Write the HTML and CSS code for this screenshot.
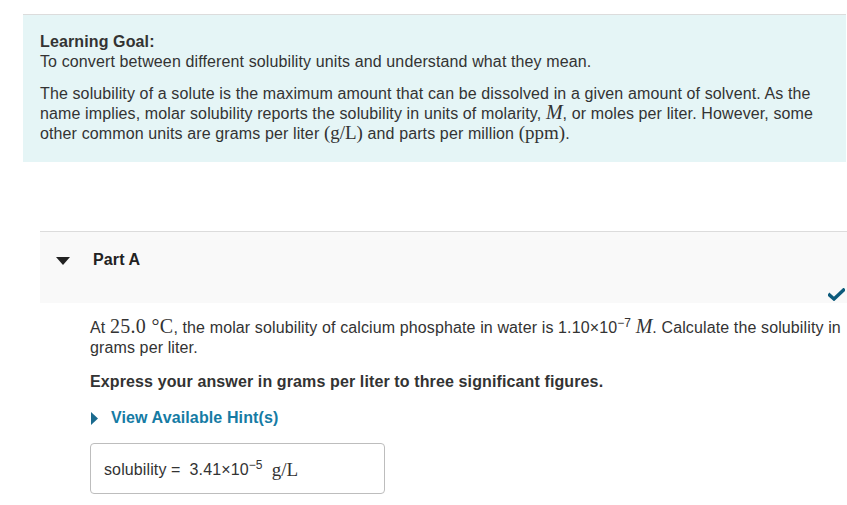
FILE: index.html
```html
<!DOCTYPE html>
<html>
<head>
<meta charset="utf-8">
<link rel="stylesheet" href="styles.css">
</head>
<body>
<div class="intro">
  <div class="goal-title">Learning Goal:</div>
  <div class="goal-text">To convert between different solubility units and understand what they mean.</div>
  <p class="intro-p">The solubility of a solute is the maximum amount that can be dissolved in a given amount of solvent. As the name implies, molar solubility reports the solubility in units of molarity, <span class="mi">M</span>, or moles per liter. However, some other common units are grams per liter <span class="mr">(g/L)</span> and parts per million <span class="mr">(ppm)</span>.</p>
</div>

<div class="part">
  <div class="part-header">
    <svg class="caret-down" width="14" height="8" viewBox="0 0 14 8"><path d="M0 0 H14 L7 8 Z" fill="#222"/></svg>
    <span class="part-title">Part A</span>
    <svg class="check" width="17" height="13" viewBox="0 0 17 13"><path d="M1.5 7 L6 11 L15.5 2" fill="none" stroke="#0d5b7c" stroke-width="3.4" stroke-linecap="square"/></svg>
  </div>
  <div class="part-body">
    <p class="question">At <span class="mr big">25.0 °C</span>, the molar solubility of calcium phosphate in water is 1.10×10<sup>−7</sup> <span class="mi">M</span>. Calculate the solubility in grams per liter.</p>
    <p class="instr">Express your answer in grams per liter to three significant figures.</p>
    <div class="hint">
      <svg class="caret-right" width="7" height="13" viewBox="0 0 7 13"><path d="M0 0 L7 6.5 L0 13 Z" fill="#1a6a8e"/></svg>
      <span>View Available Hint(s)</span>
    </div>
    <div class="answer">
      <span class="ans-label">solubility =</span>
      <span class="ans-val">3.41×10<sup>−5</sup></span>
      <span class="mr ans-unit">g/L</span>
    </div>
  </div>
</div>
</body>
</html>
```

FILE: styles.css
```css
html, body {
  margin: 0;
  padding: 0;
  background: #fff;
}
body {
  font-family: "Liberation Sans", Arial, sans-serif;
  font-size: 16px;
  line-height: 20px;
  letter-spacing: 0.12px;
  color: #333;
  padding-top: 14px;
}
.intro {
  margin-left: 23px;
  width: 823px;
  box-sizing: border-box;
  border-top: 1px solid #dcdcdc;
  background: #e5f5f6;
  padding: 17px 17px 18px 17px;
}
.goal-title {
  font-weight: bold;
}
.intro-p {
  margin: 12px 0 0 0;
}
.mi {
  font-family: "Liberation Serif", "Times New Roman", serif;
  font-style: italic;
  font-size: 20px;
  line-height: 0;
  letter-spacing: 0;
}
.mr {
  font-family: "Liberation Serif", "Times New Roman", serif;
  font-size: 19px;
  line-height: 0;
  letter-spacing: 0;
}
.mr.big {
  font-size: 20px;
  letter-spacing: 0.3px;
}
.part {
  margin-top: 69px;
  margin-left: 40px;
  border-top: 1px solid #dcdcdc;
}
.part-header {
  position: relative;
  background: #f9f9f9;
  height: 71px;
  display: flex;
  align-items: flex-start;
  padding-top: 18px;
  box-sizing: border-box;
}
.caret-down {
  margin: 7px 0 0 16px;
}
.part-title {
  font-weight: bold;
  margin-left: 23px;
  color: #222;
}
.check {
  position: absolute;
  right: 2px;
  bottom: 2px;
}
.part-body {
  padding-left: 50px;
}
.question {
  margin: 15px 0 0 0;
}
.question sup, .ans-val sup {
  font-size: 12px;
  line-height: 0;
  vertical-align: 6px;
}
.instr {
  font-weight: bold;
  margin: 14px 0 0 0;
}
.hint {
  margin-top: 16px;
  display: flex;
  align-items: center;
  gap: 13px;
  color: #157ba4;
  font-weight: bold;
  padding-left: 1px;
}
.answer {
  margin-top: 15px;
  width: 295px;
  height: 51px;
  box-sizing: border-box;
  border: 1px solid #bdbdbd;
  border-radius: 4px;
  display: flex;
  align-items: center;
  padding: 2px 0 0 13px;
}
.ans-label {
  margin-right: 9px;
}
.ans-unit {
  margin-left: 9px;
}
```
